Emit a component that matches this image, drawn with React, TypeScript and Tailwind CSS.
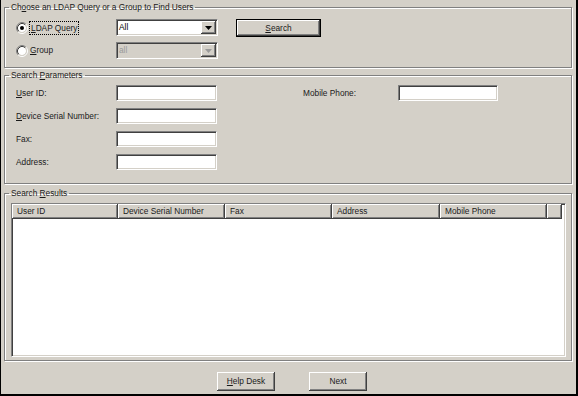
const sunken =
  "border border-t-[#808080] border-l-[#808080] border-b-white border-r-white shadow-[inset_1px_1px_0_#404040,inset_-1px_-1px_0_#d4d0c8]";
const raised =
  "bg-[#d4d0c8] shadow-[inset_-1px_-1px_0_#404040,inset_1px_1px_0_#fff,inset_-2px_-2px_0_#808080]";
const groupBox =
  "border border-[#808080] shadow-[inset_1px_1px_0_#fff,1px_1px_0_#fff]";

const columns = [
  { label: "User ID", width: "w-[106px]" },
  { label: "Device Serial Number", width: "w-[107px]" },
  { label: "Fax", width: "w-[107px]" },
  { label: "Address", width: "w-[108px]" },
  { label: "Mobile Phone", width: "w-[107px]" },
];

function Radio({ checked }: { checked?: boolean }) {
  return (
    <svg width="12" height="12" viewBox="0 0 12 12" className="shrink-0">
      <circle cx="6" cy="6" r="4" fill="#fff" />
      <path d="M2.11 9.89A5.5 5.5 0 0 1 9.89 2.11" stroke="#808080" fill="none" />
      <path d="M9.89 2.11A5.5 5.5 0 0 1 2.11 9.89" stroke="#fff" fill="none" />
      <path d="M2.82 9.18A4.5 4.5 0 0 1 9.18 2.82" stroke="#404040" fill="none" />
      <path d="M9.18 2.82A4.5 4.5 0 0 1 2.82 9.18" stroke="#d4d0c8" fill="none" />
      {checked && <circle cx="6" cy="6" r="2" fill="#000" />}
    </svg>
  );
}

function Select({ value, disabled }: { value: string; disabled?: boolean }) {
  return (
    <div
      className={`flex h-[17px] w-[102px] items-center ${sunken} ${
        disabled ? "bg-[#d4d0c8] text-[#9a9a9a]" : "bg-white text-black"
      }`}
    >
      <span className="flex-1 pl-[2px] leading-[13px]">{value}</span>
      <div className={`mr-px flex h-[13px] w-[15px] items-center justify-center ${raised}`}>
        <svg width="7" height="4" viewBox="0 0 7 4">
          <path d="M0 0h7L3.5 4z" fill={disabled ? "#9a9a9a" : "#000"} />
        </svg>
      </div>
    </div>
  );
}

function TextBox({ width }: { width: string }) {
  return <div className={`h-[16px] shrink-0 bg-white ${width} ${sunken}`} />;
}

function Legend({ children }: { children: React.ReactNode }) {
  return <legend className="ml-[4px] px-[2px] leading-[13px]">{children}</legend>;
}

export default function App() {
  return (
    <div
      className="flex h-[396px] w-[578px] flex-col whitespace-nowrap border-b-2 border-l border-r-2 border-black bg-[#d4d0c8] pl-[3px] pr-[4px] pt-px text-[8.3px] text-[#1a1a1a]"
      style={{ fontFamily: '"Liberation Sans", Arial, sans-serif' }}
    >
      <fieldset className={`h-[67px] ${groupBox}`}>
        <Legend>
          Ch<u>o</u>ose an LDAP Query or a Group to Find Users
        </Legend>
        <div className="mt-[5px] flex h-[17px] items-center pl-[11px]">
          <div className="flex w-[100px] items-center">
            <Radio checked />
            <span className="ml-px border border-dotted border-black px-px leading-[12px]">
              <u>L</u>DAP Query
            </span>
          </div>
          <Select value="All" />
          <button
            className={`ml-[18px] h-[18px] w-[85px] border border-black leading-[14px] ${raised}`}
          >
            <u>S</u>earch
          </button>
        </div>
        <div className="mt-[6px] flex h-[17px] items-center pl-[11px]">
          <div className="flex w-[100px] items-center">
            <Radio />
            <span className="ml-[2px]">
              <u>G</u>roup
            </span>
          </div>
          <Select value="all" disabled />
        </div>
      </fieldset>

      <fieldset className={`mt-px h-[115px] ${groupBox}`}>
        <Legend>
          Search <u>P</u>arameters
        </Legend>
        <div className="mt-[3px] flex flex-col gap-[7px] pl-[11px]">
          <div className="flex items-center">
            <span className="w-[100px]">
              <u>U</u>ser ID:
            </span>
            <TextBox width="w-[101px]" />
            <span className="ml-[86px] w-[95px]">Mobile Phone:</span>
            <TextBox width="w-[100px]" />
          </div>
          <div className="flex items-center">
            <span className="w-[100px]">
              <u>D</u>evice Serial Number:
            </span>
            <TextBox width="w-[101px]" />
          </div>
          <div className="flex items-center">
            <span className="w-[100px]">Fax:</span>
            <TextBox width="w-[101px]" />
          </div>
          <div className="flex items-center">
            <span className="w-[100px]">Address:</span>
            <TextBox width="w-[101px]" />
          </div>
        </div>
      </fieldset>

      <fieldset className={`mt-[3px] h-[174px] ${groupBox}`}>
        <Legend>
          Search <u>R</u>esults
        </Legend>
        <div className={`ml-[6px] mr-[5px] mt-[3px] h-[154px] bg-white ${sunken}`}>
          <div className="flex">
            {columns.map((col) => (
              <div
                key={col.label}
                className={`h-[15px] shrink-0 border-b border-r border-[#404040] bg-[#d4d0c8] pl-[5px] leading-[14px] shadow-[inset_1px_1px_0_#fff,inset_-1px_-1px_0_#808080] ${col.width}`}
              >
                {col.label}
              </div>
            ))}
            <div className="h-[15px] w-[15px] shrink-0 border-b border-r border-[#404040] bg-[#d4d0c8] shadow-[inset_1px_1px_0_#fff,inset_-1px_-1px_0_#808080]" />
          </div>
        </div>
      </fieldset>

      <div className="mt-[11px] flex justify-center gap-[34px] pl-[8px]">
        <button className={`h-[19px] w-[58px] leading-[15px] ${raised}`}>
          <u>H</u>elp Desk
        </button>
        <button className={`h-[19px] w-[58px] leading-[15px] ${raised}`}>Next</button>
      </div>
    </div>
  );
}
